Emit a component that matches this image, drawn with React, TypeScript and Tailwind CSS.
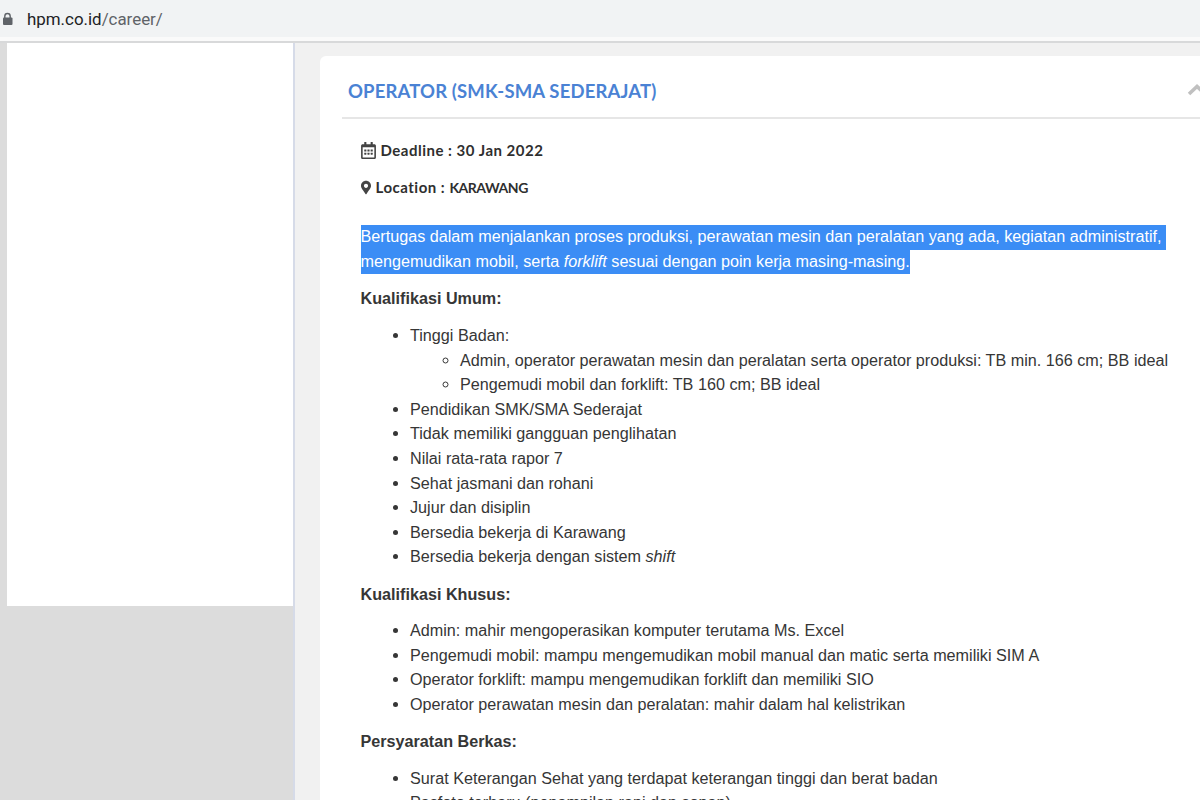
import React from "react";
import { FaRegCalendarAlt, FaMapMarkerAlt } from "react-icons/fa";

const sans = "font-['Liberation_Sans',Arial,sans-serif]";
const head = "font-['Lato','Noto_Sans',sans-serif]";

function Li({ children }: { children: React.ReactNode }) {
  return <li className="h-[24.6px]">{children}</li>;
}

export default function App() {
  return (
    <div className={`w-[1200px] h-[800px] overflow-hidden flex flex-col bg-white ${sans}`}>
      <div className="h-[37px] shrink-0 bg-[#f1f3f4] flex items-center">
        <svg width="11" height="14" viewBox="0 0 11 14" className="ml-[2px] mt-[1px]">
          <path d="M2.8 6V4.2a2.7 2.7 0 0 1 5.4 0V6" fill="none" stroke="#5f6368" strokeWidth="1.4" />
          <rect x="1" y="5.6" width="9.5" height="7.4" rx="1" fill="#5f6368" />
        </svg>
        <div className="ml-[14px] mt-[3px] text-[16.9px] font-['Roboto','Noto_Sans',sans-serif] text-[#202124]">
          hpm.co.id<span className="text-[#5f6368]">/career/</span>
        </div>
      </div>
      <div className="h-[4px] shrink-0 bg-[#fafafa]" />
      <div className="h-[2px] shrink-0 bg-[#d8d9da]" />
      <div className="flex flex-1 min-h-0 bg-[#f1f1f1]">
        <div className="w-[293px] shrink-0 bg-[#dcdcdc] pl-[7px]">
          <div className="h-[563px] bg-white" />
        </div>
        <div className="w-[2px] shrink-0 bg-[#d6dbe8]" />
        <div className="pl-[25px] pt-[13px] shrink-0">
          <div className="w-[900px] h-[800px] bg-white rounded-t-[6px] pl-[22px] text-[#363636]">
            <div className="w-[858px] h-[63px] border-b-[2px] border-[#e6e6e6] flex items-center pl-[6px] pt-[9px] relative">
              <h2 className={`text-[18.5px] font-bold leading-none text-[#4a82d4] tracking-[0.15px] ${head}`}>OPERATOR (SMK-SMA SEDERAJAT)</h2>
              <svg width="20" height="14" viewBox="0 0 20 14" className="absolute left-[845px] top-[27px]" fill="none" stroke="#c0c0c0" strokeWidth="3.6">
                <path d="M2 11 L10 3.5 L18 11" />
              </svg>
            </div>
            <div className="pl-[18.5px]">
              <div className={`mt-[21px] flex items-center h-[20px] text-[#2f2f2f] text-[15px] font-bold tracking-[0.5px] ${head}`}>
                <FaRegCalendarAlt className="w-[15px] h-[17px] text-[#444] mr-[5px]" />
                Deadline : 30 Jan 2022
              </div>
              <div className={`mt-[17px] flex items-center h-[20px] text-[#2f2f2f] text-[15px] font-bold ${head}`}>
                <FaMapMarkerAlt className="w-[10px] h-[15px] text-[#444] mr-[5px]" />
                <span className="tracking-[0.5px] whitespace-pre">Location : </span>
                <span className="text-[14px] tracking-[-0.45px]">KARAWANG</span>
              </div>
              <div className="mt-[28px] text-[16.18px] text-white">
                <div className="w-fit whitespace-nowrap bg-[#3b8df5] h-[24.5px] leading-[23px] pr-[5px]">Bertugas dalam menjalankan proses produksi, perawatan mesin dan peralatan yang ada, kegiatan administratif,</div>
                <div className="w-fit whitespace-nowrap bg-[#3b8df5] h-[24.5px] leading-[23px]">mengemudikan mobil, serta <em>forklift</em> sesuai dengan poin kerja masing-masing.</div>
              </div>
              <div className="text-[16.18px] leading-[24.6px]">
                <p className="mt-[12px] font-bold">Kualifikasi Umum:</p>
                <ul className="mt-[12.4px] pl-[49.5px] list-disc">
                  <li>
                    Tinggi Badan:
                    <ul className="pl-[50px] list-[circle]">
                      <Li>Admin, operator perawatan mesin dan peralatan serta operator produksi: TB min. 166 cm; BB ideal</Li>
                      <Li>Pengemudi mobil dan forklift: TB 160 cm; BB ideal</Li>
                    </ul>
                  </li>
                  <Li>Pendidikan SMK/SMA Sederajat</Li>
                  <Li>Tidak memiliki gangguan penglihatan</Li>
                  <Li>Nilai rata-rata rapor 7</Li>
                  <Li>Sehat jasmani dan rohani</Li>
                  <Li>Jujur dan disiplin</Li>
                  <Li>Bersedia bekerja di Karawang</Li>
                  <Li>Bersedia bekerja dengan sistem <em>shift</em></Li>
                </ul>
                <p className="mt-[13px] font-bold">Kualifikasi Khusus:</p>
                <ul className="mt-[11.6px] pl-[49.5px] list-disc">
                  <Li>Admin: mahir mengoperasikan komputer terutama Ms. Excel</Li>
                  <Li>Pengemudi mobil: mampu mengemudikan mobil manual dan matic serta memiliki SIM A</Li>
                  <Li>Operator forklift: mampu mengemudikan forklift dan memiliki SIO</Li>
                  <Li>Operator perawatan mesin dan peralatan: mahir dalam hal kelistrikan</Li>
                </ul>
                <p className="mt-[12.4px] font-bold">Persyaratan Berkas:</p>
                <ul className="mt-[12.4px] pl-[49.5px] list-disc">
                  <Li>Surat Keterangan Sehat yang terdapat keterangan tinggi dan berat badan</Li>
                  <Li>Pasfoto terbaru (penampilan rapi dan sopan)</Li>
                </ul>
              </div>
            </div>
          </div>
        </div>
      </div>
    </div>
  );
}
